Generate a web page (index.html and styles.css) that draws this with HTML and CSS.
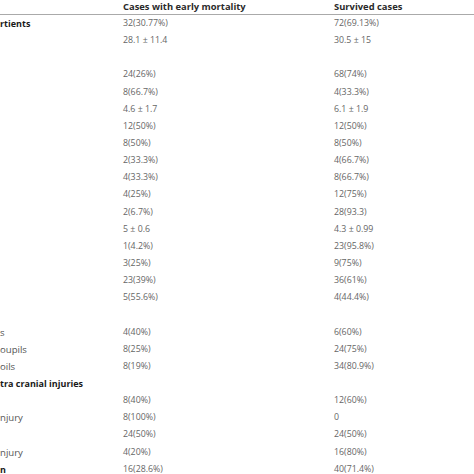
FILE: index.html
```html
<!DOCTYPE html>
<html>
<head>
<meta charset="utf-8">
<link rel="stylesheet" href="styles.css">
</head>
<body>
<div class="table">
  <div class="row head">
    <div class="c1"></div>
    <div class="c2">Cases with early mortality</div>
    <div class="c3">Survived cases</div>
  </div>
  <div class="row"><div class="c1 b">rtients</div><div class="c2">32(30.77%)</div><div class="c3">72(69.13%)</div></div>
  <div class="row"><div class="c1"></div><div class="c2">28.1 ± 11.4</div><div class="c3">30.5 ± 15</div></div>
  <div class="row"><div class="c1"></div><div class="c2"></div><div class="c3"></div></div>
  <div class="row"><div class="c1"></div><div class="c2">24(26%)</div><div class="c3">68(74%)</div></div>
  <div class="row"><div class="c1"></div><div class="c2">8(66.7%)</div><div class="c3">4(33.3%)</div></div>
  <div class="row"><div class="c1"></div><div class="c2">4.6 ± 1.7</div><div class="c3">6.1 ± 1.9</div></div>
  <div class="row"><div class="c1"></div><div class="c2">12(50%)</div><div class="c3">12(50%)</div></div>
  <div class="row"><div class="c1"></div><div class="c2">8(50%)</div><div class="c3">8(50%)</div></div>
  <div class="row"><div class="c1"></div><div class="c2">2(33.3%)</div><div class="c3">4(66.7%)</div></div>
  <div class="row"><div class="c1"></div><div class="c2">4(33.3%)</div><div class="c3">8(66.7%)</div></div>
  <div class="row"><div class="c1"></div><div class="c2">4(25%)</div><div class="c3">12(75%)</div></div>
  <div class="row"><div class="c1"></div><div class="c2">2(6.7%)</div><div class="c3">28(93.3)</div></div>
  <div class="row"><div class="c1"></div><div class="c2">5 ± 0.6</div><div class="c3">4.3 ± 0.99</div></div>
  <div class="row"><div class="c1"></div><div class="c2">1(4.2%)</div><div class="c3">23(95.8%)</div></div>
  <div class="row"><div class="c1"></div><div class="c2">3(25%)</div><div class="c3">9(75%)</div></div>
  <div class="row"><div class="c1"></div><div class="c2">23(39%)</div><div class="c3">36(61%)</div></div>
  <div class="row"><div class="c1"></div><div class="c2">5(55.6%)</div><div class="c3">4(44.4%)</div></div>
  <div class="row"><div class="c1"></div><div class="c2"></div><div class="c3"></div></div>
  <div class="row"><div class="c1 lbl">s</div><div class="c2">4(40%)</div><div class="c3">6(60%)</div></div>
  <div class="row"><div class="c1 lbl">oupils</div><div class="c2">8(25%)</div><div class="c3">24(75%)</div></div>
  <div class="row"><div class="c1 lbl">oils</div><div class="c2">8(19%)</div><div class="c3">34(80.9%)</div></div>
  <div class="row"><div class="c1 b">tra cranial injuries</div><div class="c2"></div><div class="c3"></div></div>
  <div class="row"><div class="c1"></div><div class="c2">8(40%)</div><div class="c3">12(60%)</div></div>
  <div class="row"><div class="c1 lbl">njury</div><div class="c2">8(100%)</div><div class="c3">0</div></div>
  <div class="row"><div class="c1"></div><div class="c2">24(50%)</div><div class="c3">24(50%)</div></div>
  <div class="row"><div class="c1 lbl">njury</div><div class="c2">4(20%)</div><div class="c3">16(80%)</div></div>
  <div class="row"><div class="c1 b">n</div><div class="c2">16(28.6%)</div><div class="c3">40(71.4%)</div></div>
</div>
</body>
</html>
```
FILE: styles.css
```css
html, body {
  margin: 0;
  padding: 0;
  background: #fff;
  overflow: hidden;
}
body {
  font-family: "Open Sans", "Noto Sans", sans-serif;
  font-size: 8.8px;
  color: #666;
}
.table {
  display: flex;
  flex-direction: column;
  width: 474px;
}
.row {
  display: grid;
  grid-template-columns: 123px 211px 1fr;
  height: 17.15px;
  line-height: 17.15px;
  white-space: nowrap;
}
.row.head {
  height: 14px;
  line-height: 13px;
  border-bottom: 1px solid #aaa;
  font-size: 9.4px;
  font-weight: 700;
  color: #2a2a2a;
}
.c1 {
  color: #555;
  overflow: hidden;
}
.lbl {
  font-size: 9.6px;
}
.b {
  font-weight: 700;
  color: #1a1a1a;
  font-size: 9px;
}
```
